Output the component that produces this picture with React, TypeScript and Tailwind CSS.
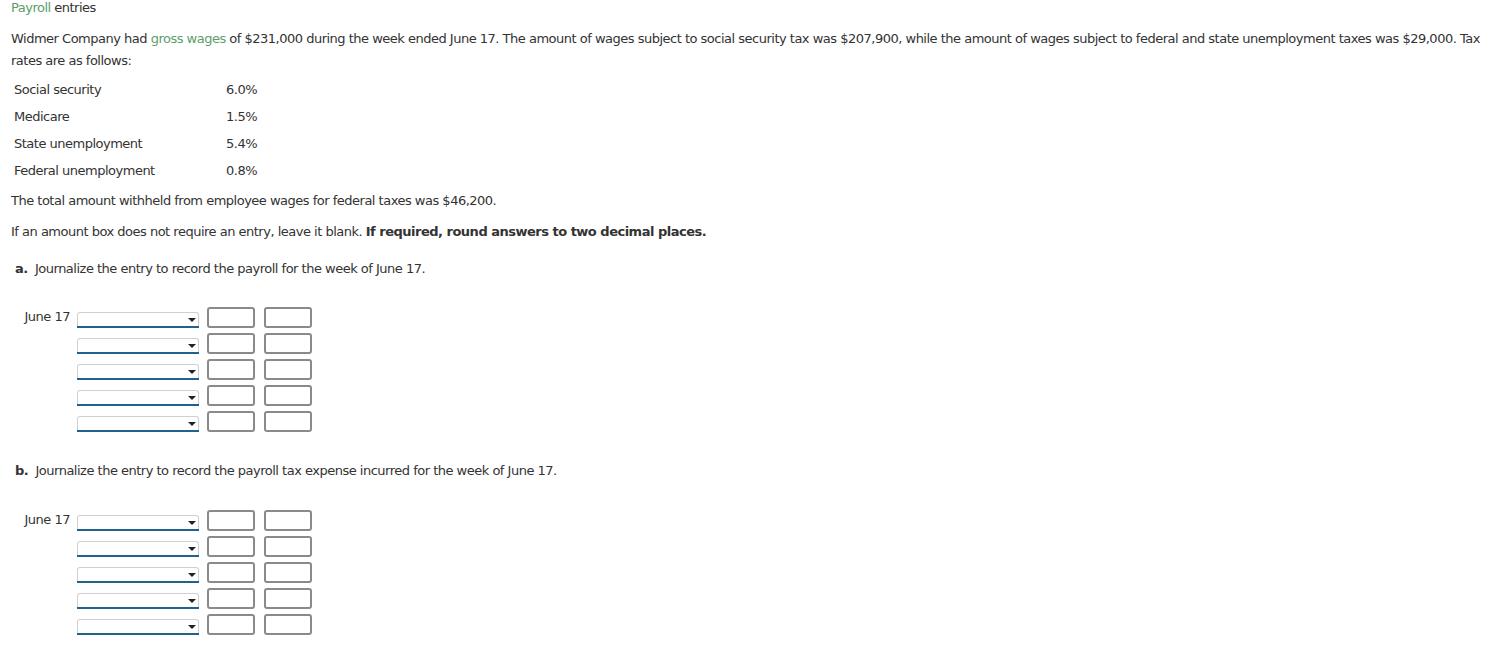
import React from "react";

const rates: [string, string][] = [
  ["Social security", "6.0%"],
  ["Medicare", "1.5%"],
  ["State unemployment", "5.4%"],
  ["Federal unemployment", "0.8%"],
];

function Row({ label }: { label?: string }) {
  return (
    <div className="flex items-center h-[26px]">
      <div className="w-[77px] pr-[7px] text-right">{label ?? ""}</div>
      <div className="relative w-[122px] h-[15px] mt-[4px] rounded-t-[3px] border border-b-0 border-[#d0d0d0] bg-white">
        <div className="absolute left-[-1px] right-[-1px] bottom-[-1px] h-[2px] bg-[#24608c]" />
        <div className="absolute right-[2px] top-[5px] w-0 h-0 border-l-[4px] border-r-[4px] border-t-[4px] border-l-transparent border-r-transparent border-t-[#222]" />
      </div>
      <div className="ml-[8px] w-[48px] h-[21px] rounded-[3px] border-2 border-[#8a8a8a] bg-white" />
      <div className="ml-[9px] w-[48px] h-[21px] rounded-[3px] border-2 border-[#8a8a8a] bg-white" />
    </div>
  );
}

function Journal() {
  return (
    <div className="flex flex-col">
      <Row label="June 17" />
      <Row />
      <Row />
      <Row />
      <Row />
    </div>
  );
}

export default function App() {
  return (
    <div
      className="w-[1504px] h-[648px] bg-white text-[#333] text-[13px] tracking-[-0.5px] overflow-hidden"
      style={{ fontFamily: "Verdana, 'DejaVu Sans', sans-serif" }}
    >
      <div className="pl-[11px] leading-[15px] pt-0">
        <span className="text-[#5c9e6a]">Payroll</span> entries
      </div>
      <p className="pl-[11px] w-[1496px] mt-[13px] leading-[22px]">
        Widmer Company had <span className="text-[#5c9e6a]">gross wages</span> of $231,000 during the week ended June 17. The amount of wages subject to social security tax was $207,900, while the amount of wages subject to federal and state unemployment taxes was $29,000. Tax rates are as follows:
      </p>
      <div className="pl-[14px] mt-[4px]">
        {rates.map(([k, v]) => (
          <div key={k} className="flex h-[27px] items-center">
            <div className="w-[212px]">{k}</div>
            <div>{v}</div>
          </div>
        ))}
      </div>
      <p className="pl-[11px] mt-[6px] leading-[22px]">The total amount withheld from employee wages for federal taxes was $46,200.</p>
      <p className="pl-[11px] mt-[9px] leading-[22px]">
        If an amount box does not require an entry, leave it blank. <b>If required, round answers to two decimal places.</b>
      </p>
      <p className="pl-[15px] mt-[15px] leading-[22px]">
        <b>a.</b>&nbsp; Journalize the entry to record the payroll for the week of June 17.
      </p>
      <div className="mt-[24px]">
        <Journal />
      </div>
      <p className="pl-[15px] mt-[26px] leading-[22px]">
        <b>b.</b>&nbsp; Journalize the entry to record the payroll tax expense incurred for the week of June 17.
      </p>
      <div className="mt-[25px]">
        <Journal />
      </div>
    </div>
  );
}
